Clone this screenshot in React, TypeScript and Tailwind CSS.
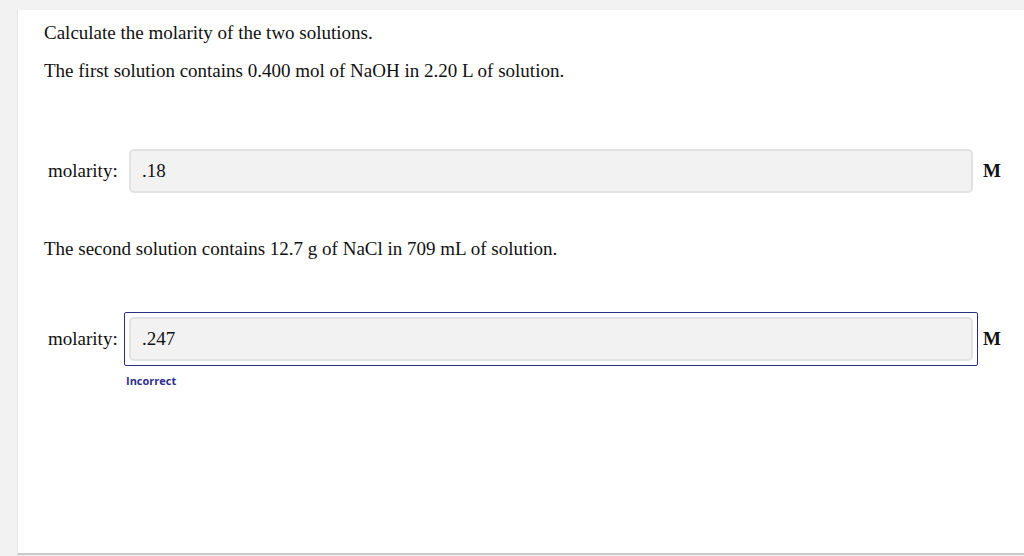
import React from "react";

const AnswerRow = ({
  value,
  incorrect = false,
}: {
  value: string;
  incorrect?: boolean;
}) => {
  return (
    <div className="flex flex-col">
      <div className="flex items-center ml-[4px]">
        <span className="w-[76px] text-[19px] text-[#111]">molarity:</span>
        <div
          className={
            incorrect
              ? "flex-1 border border-[#2b2f82] rounded-[2px] p-[4px]"
              : "flex-1 border border-transparent p-[4px]"
          }
        >
          <div className="h-[44px] flex items-center pl-[11px] bg-[#f2f2f2] border-2 border-[#e2e2e2] rounded-[5px] text-[19px] text-[#111]">
            {value}
          </div>
        </div>
        <span className="w-[46px] pl-[5px] text-[19px] font-bold text-[#111]">M</span>
      </div>
      {incorrect && (
        <span className="mt-[7px] ml-[82px] text-[11px] leading-[16px] font-bold text-[#2e2e8c] font-['Open_Sans',sans-serif]">
          Incorrect
        </span>
      )}
    </div>
  );
};

export default function App() {
  return (
    <div className="w-[1024px] h-[556px] bg-[#f2f2f2] pt-[10px] pl-[17px] overflow-hidden font-['Liberation_Serif',serif]">
      <div className="w-[1007px] h-[545px] bg-white border-l border-[#e4e4e4] border-b-2 border-b-[#c9c9c9] pl-[26px] pt-[13px] flex flex-col">
        <p className="text-[19px] leading-[20px] text-[#111]">
          Calculate the molarity of the two solutions.
        </p>
        <p className="mt-[18px] text-[19px] leading-[20px] text-[#111]">
          The first solution contains 0.400 mol of NaOH in 2.20 L of solution.
        </p>
        <div className="mt-[63px]">
          <AnswerRow value=".18" />
        </div>
        <p className="mt-[41px] text-[19px] leading-[20px] text-[#111]">
          The second solution contains 12.7 g of NaCl in 709 mL of solution.
        </p>
        <div className="mt-[53px]">
          <AnswerRow value=".247" incorrect />
        </div>
      </div>
    </div>
  );
}
